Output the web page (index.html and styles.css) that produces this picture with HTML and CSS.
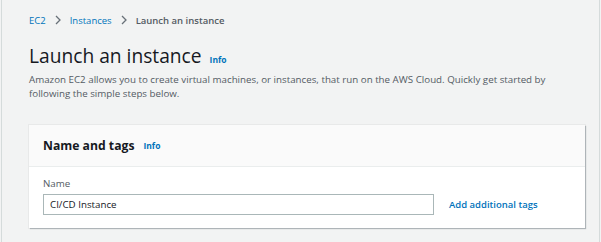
FILE: index.html
```html
<!DOCTYPE html>
<html>
<head>
<meta charset="utf-8">
<link rel="stylesheet" href="styles.css">
</head>
<body>
<div class="page">
  <nav class="crumbs">
    <a class="crumb-link">EC2</a>
    <svg class="chev" width="6" height="10" viewBox="0 0 6 10"><path d="M1 1 L5 5 L1 9" fill="none" stroke="#687078" stroke-width="1.3"/></svg>
    <a class="crumb-link">Instances</a>
    <svg class="chev" width="6" height="10" viewBox="0 0 6 10"><path d="M1 1 L5 5 L1 9" fill="none" stroke="#687078" stroke-width="1.3"/></svg>
    <span class="crumb-current">Launch an instance</span>
  </nav>
  <div class="title-row">
    <h1 class="title">Launch an instance</h1>
    <a class="info">Info</a>
  </div>
  <p class="desc">Amazon EC2 allows you to create virtual machines, or instances, that run on the AWS Cloud. Quickly get started by following the simple steps below.</p>
  <section class="card">
    <div class="card-head">
      <h2 class="card-title">Name and tags</h2>
      <a class="info small">Info</a>
    </div>
    <div class="card-body">
      <label class="label">Name</label>
      <div class="field-row">
        <div class="input">CI/CD Instance</div>
        <a class="add-link">Add additional tags</a>
      </div>
    </div>
  </section>
</div>
</body>
</html>
```
FILE: styles.css
```css
html, body {
  margin: 0;
  padding: 0;
  background: #f2f3f3;
  font-family: "Open Sans", "Noto Sans", sans-serif;
  color: #16191f;
}
.page {
  height: 242px;
  box-sizing: border-box;
  border-left: 1px solid #d5dbdb;
  border-right: 1px solid #d5dbdb;
  margin-left: 1px;
  width: 599px;
  padding: 13px 14px 0 27px;
  overflow: hidden;
}
.crumbs {
  display: flex;
  align-items: center;
  height: 14px;
  font-size: 9.5px;
}
.crumb-link {
  color: #0073bb;
}
.chev {
  margin: 0 9px 0 9px;
}
.crumb-current {
  color: #545b64;
  font-weight: 600;
}
.title-row {
  display: flex;
  align-items: baseline;
  margin-top: 17px;
}
.title {
  margin: 0;
  font-size: 19.2px;
  font-weight: 400;
  line-height: 24px;
}
.info {
  color: #0073bb;
  font-weight: 700;
  font-size: 8.5px;
  margin-left: 8px;
}
.desc {
  margin: 5px 0 0;
  font-size: 9.75px;
  line-height: 14px;
  color: #545b64;
  width: 530px;
}
.card {
  margin-top: 24px;
  background: #fff;
  width: 556px;
  box-shadow: 1px 1px 1px rgba(0,22,40,0.25), 0 0 0 1px rgba(0,0,0,0.04);
}
.card-head {
  background: #fafafa;
  height: 42px;
  box-sizing: border-box;
  border-bottom: 1px solid #eaeded;
  display: flex;
  align-items: center;
  padding-left: 14px;
}
.card-title {
  margin: 0;
  font-size: 12.2px;
  font-weight: 700;
}
.info.small {
  margin-left: 9px;
}
.card-body {
  padding: 10px 14px 13px;
}
.label {
  display: block;
  font-size: 9.75px;
  line-height: 14px;
  color: #545b64;
}
.field-row {
  display: flex;
  align-items: center;
  margin-top: 3px;
}
.input {
  width: 391px;
  height: 21px;
  box-sizing: border-box;
  border: 1px solid #aab7b8;
  font-size: 9.75px;
  line-height: 19px;
  padding-left: 6px;
  color: #16191f;
}
.add-link {
  margin-left: 15px;
  color: #0073bb;
  font-size: 9.5px;
  font-weight: 600;
}
```
